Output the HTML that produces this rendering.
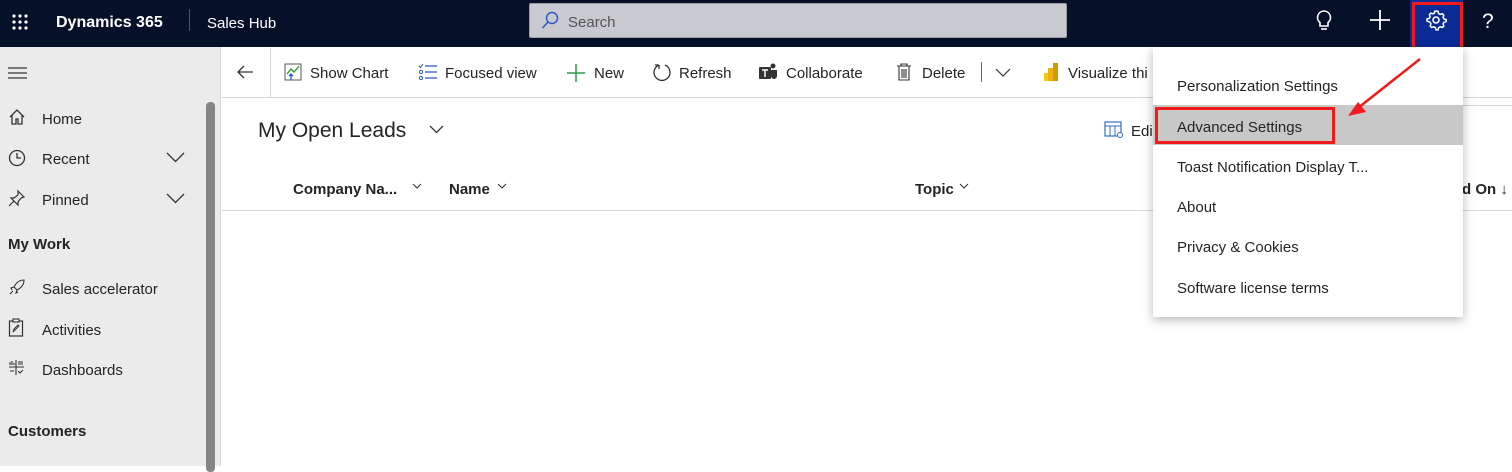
<!DOCTYPE html>
<html><head><meta charset="utf-8"><style>
*{margin:0;padding:0;box-sizing:border-box}
body{width:1512px;height:466px;overflow:hidden;background:#fff;font-family:"Liberation Sans",sans-serif;color:#242424;position:relative;font-size:15px}
.a{position:absolute;white-space:nowrap}
div.a:not(:empty):not(#menu):not(#nav):not(#side){margin-top:2px}
#nav{left:0;top:0;width:1512px;height:47px;background:#061029}
#side{left:0;top:47px;width:221px;height:419px;background:#ebebeb;border-right:1px solid #d8d8d8}
.si{left:42px;font-size:15px}
.tb{top:63px;font-size:15px}
#menu{left:1153px;top:47px;width:310px;height:270px;background:#fff;box-shadow:0 3px 10px rgba(0,0,0,.28)}
.mi{left:24px;font-size:15px}
</style></head><body>
<div id="nav" class="a">
 <svg class="a" style="left:11px;top:13px" width="18" height="18"><g fill="#fff"><circle cx="3" cy="3" r="1.6"/><circle cx="9" cy="3" r="1.6"/><circle cx="15" cy="3" r="1.6"/><circle cx="3" cy="9" r="1.6"/><circle cx="9" cy="9" r="1.6"/><circle cx="15" cy="9" r="1.6"/><circle cx="3" cy="15" r="1.6"/><circle cx="9" cy="15" r="1.6"/><circle cx="15" cy="15" r="1.6"/></g></svg>
 <div class="a" style="left:56px;top:12px;color:#fff;font-weight:bold;font-size:16px">Dynamics 365</div>
 <div class="a" style="left:189px;top:9px;width:1px;height:22px;background:#555"></div>
 <div class="a" style="left:207px;top:13px;color:#fff;font-size:15px">Sales Hub</div>
 <div class="a" style="left:529px;top:3px;width:538px;height:35px;background:#c8cad0;border:1px solid #9a9da5;border-radius:2px"></div>
 <svg class="a" style="left:541px;top:11px" width="18" height="18"><circle cx="11" cy="7" r="5.5" fill="none" stroke="#2b55c6" stroke-width="1.4"/><line x1="7" y1="11" x2="1.5" y2="17" stroke="#2b55c6" stroke-width="1.5"/></svg>
 <div class="a" style="left:568px;top:12px;color:#555;font-size:15px">Search</div>
 <svg class="a" style="left:1314px;top:9px" width="20" height="24"><path d="M10 2a6.5 6.5 0 0 0-4 11.6V17h8v-3.4A6.5 6.5 0 0 0 10 2z" fill="none" stroke="#fff" stroke-width="1.6"/><line x1="7" y1="20" x2="13" y2="20" stroke="#fff" stroke-width="1.6"/></svg>
 <svg class="a" style="left:1369px;top:9px" width="22" height="22"><path d="M11 1v20M1 11h20" stroke="#fff" stroke-width="1.8"/></svg>
 <div class="a" style="left:1410px;top:0;width:53px;height:47px;background:#0a2a96"></div>
 <div class="a" style="left:1412px;top:2px;width:51px;height:48px;border:3px solid #f21a1a"></div>
 <svg class="a" style="left:1425px;top:9px" width="22" height="22" viewBox="0 0 22 22"><circle cx="11" cy="11" r="3" fill="none" stroke="#fff" stroke-width="1.6"/><path d="M11 2l2 .3.6 2.2 1.6.9 2.2-.7 1.4 1.5-.7 2.2.9 1.6 2.2.6v2l-2.2.6-.9 1.6.7 2.2-1.4 1.5-2.2-.7-1.6.9-.6 2.2h-2l-.6-2.2-1.6-.9-2.2.7-1.4-1.5.7-2.2-.9-1.6L2 12v-2l2.2-.6.9-1.6-.7-2.2 1.4-1.5 2.2.7 1.6-.9L9.6 2.3z" fill="none" stroke="#fff" stroke-width="1.5"/></svg>
 <div class="a" style="left:1482px;top:8px;color:#fff;font-size:21px">?</div>
</div>

<div id="side" class="a">
 <svg class="a" style="left:8px;top:20px" width="19" height="12"><path d="M0 1h19M0 6h19M0 11h19" stroke="#333" stroke-width="1.3"/></svg>
 <div class="a" style="left:206px;top:55px;width:9px;height:370px;background:#858585;border-radius:4px"></div>
</div>
<svg class="a" style="left:8px;top:108px" width="18" height="18"><path d="M2 9L9 2l7 7M4 7v9h4v-5h2v5h4V7" fill="none" stroke="#333" stroke-width="1.3"/></svg>
<div class="a si" style="top:109px">Home</div>
<svg class="a" style="left:8px;top:149px" width="18" height="18"><circle cx="9" cy="9" r="7.5" fill="none" stroke="#333" stroke-width="1.3"/><path d="M9 4v5h4" fill="none" stroke="#333" stroke-width="1.3"/></svg>
<div class="a si" style="top:149px">Recent</div>
<svg class="a" style="left:166px;top:152px" width="19" height="11"><path d="M1 1l8.5 8.5L18 1" fill="none" stroke="#333" stroke-width="1.3"/></svg>
<svg class="a" style="left:8px;top:189px" width="18" height="18"><path d="M10 2l6 6-3 1-3 4 0 3-7-7h3l4-3z M6 12l-5 5" fill="none" stroke="#333" stroke-width="1.2"/></svg>
<div class="a si" style="top:190px">Pinned</div>
<svg class="a" style="left:166px;top:193px" width="19" height="11"><path d="M1 1l8.5 8.5L18 1" fill="none" stroke="#333" stroke-width="1.3"/></svg>
<div class="a" style="left:8px;top:234px;font-weight:bold">My Work</div>
<svg class="a" style="left:8px;top:278px" width="18" height="18"><path d="M16 2c-5 0-8 3-10 7l3 3c4-2 7-5 7-10zM6 9l-3 1 1 2M9 12l-1 3 2-1M2 16l3-3" fill="none" stroke="#333" stroke-width="1.1"/></svg>
<div class="a si" style="top:279px">Sales accelerator</div>
<svg class="a" style="left:8px;top:318px" width="16" height="20"><rect x="1.5" y="3" width="13" height="15" fill="none" stroke="#333" stroke-width="1.2"/><rect x="5" y="1" width="6" height="3" fill="#ebebeb" stroke="#333" stroke-width="1.1"/><path d="M5 14l1-3 4-4 1 1-4 4z" fill="none" stroke="#333"/></svg>
<div class="a si" style="top:320px">Activities</div>
<svg class="a" style="left:8px;top:359px" width="17" height="17"><path d="M1 8h15M8 1v15M2 6V3M4 6V2M6 6V4M10 3h5M10 5h5M2 12h4M10 12l2 2 3-3" fill="none" stroke="#333" stroke-width="1.1"/></svg>
<div class="a si" style="top:360px">Dashboards</div>
<div class="a" style="left:8px;top:421px;font-weight:bold">Customers</div>

<div class="a" style="left:222px;top:97px;width:1290px;height:1px;background:#d6d6d6"></div>
<div class="a" style="left:270px;top:48px;width:1px;height:49px;background:#d6d6d6"></div>
<svg class="a" style="left:236px;top:64px" width="18" height="16"><path d="M17 8H2M8 2L2 8l6 6" fill="none" stroke="#333" stroke-width="1.3"/></svg>
<svg class="a" style="left:284px;top:63px" width="18" height="18"><rect x="1" y="1" width="16" height="16" fill="none" stroke="#555"/><path d="M3 11l4-5 3 3 5-6" fill="none" stroke="#2a9a2a" stroke-width="1.3"/><path d="M7 17v-6M5 13l2-2 2 2" stroke="#1f5bd0" fill="none" stroke-width="1.3"/></svg>
<div class="a tb" style="left:310px">Show Chart</div>
<svg class="a" style="left:418px;top:63px" width="20" height="18"><path d="M7 3h12M7 9h12M7 15h12" stroke="#2b55c6" stroke-width="1.3"/><circle cx="3" cy="9" r="1.6" fill="none" stroke="#2b55c6"/><circle cx="3" cy="15" r="1.6" fill="none" stroke="#2b55c6"/><path d="M1 3l1.5 1.5L5 1" fill="none" stroke="#2b55c6"/></svg>
<div class="a tb" style="left:445px">Focused view</div>
<svg class="a" style="left:566px;top:63px" width="20" height="20"><path d="M10 1v18M1 10h18" stroke="#2a9a4a" stroke-width="1.5"/></svg>
<div class="a tb" style="left:594px">New</div>
<svg class="a" style="left:652px;top:62px" width="20" height="20"><path d="M7 3A8 8 0 1 0 13 3M7 3v4M7 3H3" fill="none" stroke="#333" stroke-width="1.3"/></svg>
<div class="a tb" style="left:679px">Refresh</div>
<svg class="a" style="left:758px;top:62px" width="20" height="20"><circle cx="15" cy="4" r="2.5" fill="#333"/><path d="M12 8h7v6a3 3 0 0 1-6 0z" fill="#333"/><rect x="1" y="5" width="12" height="12" rx="1" fill="#333"/><path d="M4 8h6M7 8v7" stroke="#fff" stroke-width="1.5"/></svg>
<div class="a tb" style="left:786px">Collaborate</div>
<svg class="a" style="left:896px;top:62px" width="16" height="20"><path d="M1 4h14M5 4V2h6v2M3 4v14h10V4M6 7v9M8 7v9M10 7v9" fill="none" stroke="#333" stroke-width="1.1"/></svg>
<div class="a tb" style="left:922px">Delete</div>
<div class="a" style="left:981px;top:62px;width:1px;height:20px;background:#666"></div>
<svg class="a" style="left:995px;top:68px" width="16" height="9"><path d="M1 1l7 7 7-7" fill="none" stroke="#333" stroke-width="1.2"/></svg>
<svg class="a" style="left:1043px;top:62px" width="16" height="20"><rect x="1" y="11" width="4" height="8" fill="#f2c811"/><rect x="5" y="6" width="5" height="13" fill="#e8b40a"/><rect x="10" y="1" width="5" height="18" fill="#d69a00"/></svg>
<div class="a tb" style="left:1068px">Visualize thi</div>

<div class="a" style="left:258px;top:117px;font-size:21px">My Open Leads</div>
<svg class="a" style="left:429px;top:125px" width="15" height="9"><path d="M1 1l6.5 6.5L14 1" fill="none" stroke="#333" stroke-width="1.3"/></svg>
<svg class="a" style="left:1104px;top:121px" width="20" height="18"><rect x="1" y="1" width="16" height="14" fill="none" stroke="#2b6fc6" stroke-width="1.2"/><path d="M1 5h16M6 5v10M11 5v10" stroke="#2b6fc6"/><circle cx="16" cy="14" r="2.5" fill="#fff" stroke="#2b6fc6"/></svg>
<div class="a" style="left:1131px;top:121px">Edi</div>
<div class="a" style="left:293px;top:179px;font-weight:bold">Company Na...</div>
<svg class="a" style="left:412px;top:183px" width="10" height="6"><path d="M1 1l4 4 4-4" fill="none" stroke="#333"/></svg>
<div class="a" style="left:449px;top:179px;font-weight:bold">Name</div>
<svg class="a" style="left:497px;top:183px" width="10" height="6"><path d="M1 1l4 4 4-4" fill="none" stroke="#333"/></svg>
<div class="a" style="left:915px;top:179px;font-weight:bold">Topic</div>
<svg class="a" style="left:959px;top:183px" width="10" height="6"><path d="M1 1l4 4 4-4" fill="none" stroke="#333"/></svg>
<div class="a" style="left:1462px;top:179px;font-weight:bold">d On ↓</div>
<div class="a" style="left:222px;top:210px;width:1290px;height:1px;background:#d6d6d6"></div>
<div class="a" style="left:1463px;top:105px;width:49px;height:40px;border-top:1px solid #d6d6d6"></div>

<div id="menu" class="a">
 <div class="a mi" style="top:29px">Personalization Settings</div>
 <div class="a" style="left:0;top:58px;width:310px;height:40px;background:#c8c8c8"></div>
 <div class="a" style="left:2px;top:60px;width:180px;height:37px;border:3px solid #f21a1a"></div>
 <div class="a mi" style="top:70px">Advanced Settings</div>
 <div class="a mi" style="top:110px">Toast Notification Display T...</div>
 <div class="a mi" style="top:150px">About</div>
 <div class="a mi" style="top:190px">Privacy &amp; Cookies</div>
 <div class="a mi" style="top:231px">Software license terms</div>
</div>
<svg class="a" style="left:1340px;top:55px" width="85" height="65"><line x1="80" y1="4" x2="18" y2="53" stroke="#f21a1a" stroke-width="2.5"/><path d="M8 61l18-4-8-10z" fill="#f21a1a"/></svg>
</body></html>
